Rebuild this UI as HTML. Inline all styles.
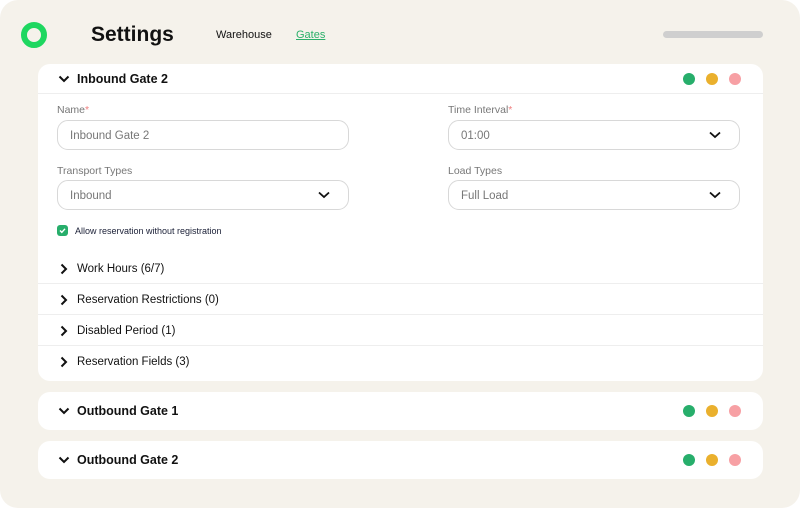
<!DOCTYPE html>
<html><head><style>
*{box-sizing:border-box;margin:0;padding:0}
body{width:800px;height:508px;background:#fff;font-family:"Liberation Sans",sans-serif;overflow:hidden}
.frame{position:absolute;left:0;top:0;width:800px;height:508px;background:#f5f2eb;border-radius:18px}
.abs{position:absolute}
.card{position:absolute;left:38px;width:725px;background:#fff;border-radius:12px}
.title{position:absolute;left:77px;font-size:12.5px;font-weight:bold;color:#111}
.dots{position:absolute;right:22px;display:flex;gap:11px}
.dots i{width:12px;height:12px;border-radius:50%;display:block}
.lbl{position:absolute;font-size:10.5px;color:#777}
.lbl b{color:#f08080;font-weight:normal}
.inp{position:absolute;height:30px;width:292px;border:1px solid #d8d8d8;border-radius:11px;font-size:11.5px;color:#777;padding:9px 12px 0}
.inp svg{position:absolute;right:18px;top:10px}
.row{position:absolute;left:0;width:725px;height:31px;border-top:1px solid #eee;font-size:11.5px;color:#111}
.row span{position:absolute;left:39px;top:10px}
.row svg{position:absolute;left:22px;top:10px}
</style></head><body>
<div class="frame"></div>
<div class="abs" style="left:21px;top:22px;width:26px;height:26px;border-radius:50%;border:6.5px solid #1ed760"></div>
<div class="abs" style="left:91px;top:23px;font-size:21px;font-weight:bold;color:#111">Settings</div>
<div class="abs" style="left:216px;top:29px;font-size:11px;color:#111">Warehouse</div>
<div class="abs" style="left:296px;top:29px;font-size:11px;color:#2bb06a;text-decoration:underline">Gates</div>
<div class="abs" style="left:663px;top:31px;width:100px;height:7px;border-radius:4px;background:#cfcfcf"></div>

<div class="card" style="top:64px;height:317px">
  <svg class="abs" style="left:20px;top:10px" width="12" height="10" viewBox="0 0 12 10"><path d="M1.5 2.5L6 7L10.5 2.5" fill="none" stroke="#111" stroke-width="2"/></svg>
  <div class="title" style="left:39px;top:8px">Inbound Gate 2</div>
  <div class="dots" style="top:9px"><i style="background:#27ae6b"></i><i style="background:#eab02d"></i><i style="background:#f7a0a4"></i></div>
  <div class="abs" style="left:0;top:29px;width:725px;height:1px;background:#eee"></div>
  <div class="lbl" style="left:19px;top:40px">Name<b>*</b></div>
  <div class="inp" style="left:19px;top:56px">Inbound Gate 2</div>
  <div class="lbl" style="left:410px;top:40px">Time Interval<b>*</b></div>
  <div class="inp" style="left:410px;top:56px">01:00<svg width="12" height="8" viewBox="0 0 12 8"><path d="M1 1.5L6 6L11 1.5" fill="none" stroke="#111" stroke-width="1.8"/></svg></div>
  <div class="lbl" style="left:19px;top:101px">Transport Types</div>
  <div class="inp" style="left:19px;top:116px">Inbound<svg width="12" height="8" viewBox="0 0 12 8"><path d="M1 1.5L6 6L11 1.5" fill="none" stroke="#111" stroke-width="1.8"/></svg></div>
  <div class="lbl" style="left:410px;top:101px">Load Types</div>
  <div class="inp" style="left:410px;top:116px">Full Load<svg width="12" height="8" viewBox="0 0 12 8"><path d="M1 1.5L6 6L11 1.5" fill="none" stroke="#111" stroke-width="1.8"/></svg></div>
  <div class="abs" style="left:19px;top:161px;width:11px;height:11px;border-radius:3px;background:#27ae6b"><svg width="11" height="11" viewBox="0 0 11 11" style="position:absolute;left:0;top:0"><path d="M3 5.5L4.8 7.3L8 3.8" fill="none" stroke="#fff" stroke-width="1.4"/></svg></div>
  <div class="abs" style="left:37px;top:162px;font-size:9px;color:#1a1f36">Allow reservation without registration</div>
  <div class="row" style="top:189px;border-top:none"><svg width="8" height="12" viewBox="0 0 8 12"><path d="M1.5 1.5L6 6L1.5 10.5" fill="none" stroke="#111" stroke-width="2"/></svg><span>Work Hours (6/7)</span></div>
  <div class="row" style="top:219px"><svg width="8" height="12" viewBox="0 0 8 12"><path d="M1.5 1.5L6 6L1.5 10.5" fill="none" stroke="#111" stroke-width="2"/></svg><span>Reservation Restrictions (0)</span></div>
  <div class="row" style="top:250px"><svg width="8" height="12" viewBox="0 0 8 12"><path d="M1.5 1.5L6 6L1.5 10.5" fill="none" stroke="#111" stroke-width="2"/></svg><span>Disabled Period (1)</span></div>
  <div class="row" style="top:281px"><svg width="8" height="12" viewBox="0 0 8 12"><path d="M1.5 1.5L6 6L1.5 10.5" fill="none" stroke="#111" stroke-width="2"/></svg><span>Reservation Fields (3)</span></div>
</div>

<div class="card" style="top:392px;height:38px">
  <svg class="abs" style="left:20px;top:14px" width="12" height="10" viewBox="0 0 12 10"><path d="M1.5 2.5L6 7L10.5 2.5" fill="none" stroke="#111" stroke-width="2"/></svg>
  <div class="title" style="left:39px;top:12px">Outbound Gate 1</div>
  <div class="dots" style="top:13px"><i style="background:#27ae6b"></i><i style="background:#eab02d"></i><i style="background:#f7a0a4"></i></div>
</div>
<div class="card" style="top:441px;height:38px">
  <svg class="abs" style="left:20px;top:14px" width="12" height="10" viewBox="0 0 12 10"><path d="M1.5 2.5L6 7L10.5 2.5" fill="none" stroke="#111" stroke-width="2"/></svg>
  <div class="title" style="left:39px;top:12px">Outbound Gate 2</div>
  <div class="dots" style="top:13px"><i style="background:#27ae6b"></i><i style="background:#eab02d"></i><i style="background:#f7a0a4"></i></div>
</div>
</body></html>
